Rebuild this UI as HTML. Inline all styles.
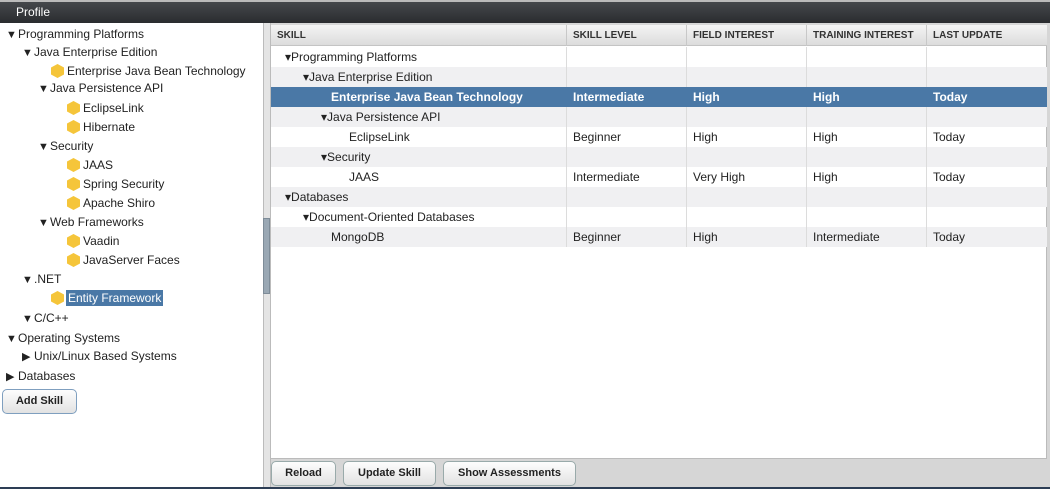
<!DOCTYPE html><html><head><style>
*{margin:0;padding:0;box-sizing:border-box}
body{width:1050px;height:489px;overflow:hidden;background:#d6d6d6;font-family:"Liberation Sans",sans-serif;font-size:12px;color:#222;position:relative}
.title{position:absolute;left:0;top:0;width:1050px;height:23px;background:linear-gradient(#45484c,#2a2c2f);border-top:2px solid #bbb;color:#fff;font-size:12px;padding:3px 0 0 16px}
.left{position:absolute;left:0;top:23px;width:263px;height:464px;background:#fff}
.sb{position:absolute;left:263px;top:23px;width:8px;height:464px;background:#e4e4e4;border-left:1px solid #bbb;border-right:1px solid #bbb}
.thumb{position:absolute;left:263px;top:218px;width:7px;height:76px;background:#9aa8b4;border:1px solid #7e8c98}
.t{position:absolute;white-space:nowrap;font-size:12px}
.tri{display:inline-block;width:12px;font-size:11px}
.hex{position:absolute;width:13px;height:14px;background:#f5c53a;clip-path:polygon(50% 0,100% 25%,100% 75%,50% 100%,0 75%,0 25%)}
.btn{position:absolute;height:25px;border:1px solid #9aa;border-radius:5px;background:linear-gradient(#fdfdfd,#e2e2e2);font-weight:bold;font-size:11px;text-align:center;line-height:23px;color:#222}
.right{position:absolute;left:271px;top:25px;width:776px;height:434px;background:#fff;border-right:1px solid #bbb;border-bottom:1px solid #bbb}
.hdr{position:absolute;left:0;top:0;width:776px;height:21px;background:linear-gradient(#f4f4f4,#dcdcdc);border-bottom:1px solid #c4c4c4}
.hc{position:absolute;top:0;height:21px;font-size:10px;font-weight:bold;color:#333;padding:5px 0 0 6px;border-right:1px solid #c8c8c8}
.row{position:absolute;left:0;width:776px;height:20px}
.c{position:absolute;top:0;height:20px;padding:3px 0 0 6px;border-right:1px solid #dcdcdc;white-space:nowrap}
.sel{background:#4a78a6;color:#fff;font-weight:bold}
.g{background:#f0f0f2}
</style></head><body>
<div class="title">Profile</div>
<div class="left">
<div class="t" style="left:6px;top:4px"><span class="tri">▼</span>Programming Platforms</div>
<div class="t" style="left:22px;top:22px"><span class="tri">▼</span>Java Enterprise Edition</div>
<div class="hex" style="left:51px;top:41px"></div><div class="t" style="left:67px;top:41px">Enterprise Java Bean Technology</div>
<div class="t" style="left:38px;top:58px"><span class="tri">▼</span>Java Persistence API</div>
<div class="hex" style="left:67px;top:78px"></div><div class="t" style="left:83px;top:78px">EclipseLink</div>
<div class="hex" style="left:67px;top:97px"></div><div class="t" style="left:83px;top:97px">Hibernate</div>
<div class="t" style="left:38px;top:116px"><span class="tri">▼</span>Security</div>
<div class="hex" style="left:67px;top:135px"></div><div class="t" style="left:83px;top:135px">JAAS</div>
<div class="hex" style="left:67px;top:154px"></div><div class="t" style="left:83px;top:154px">Spring Security</div>
<div class="hex" style="left:67px;top:173px"></div><div class="t" style="left:83px;top:173px">Apache Shiro</div>
<div class="t" style="left:38px;top:192px"><span class="tri">▼</span>Web Frameworks</div>
<div class="hex" style="left:67px;top:211px"></div><div class="t" style="left:83px;top:211px">Vaadin</div>
<div class="hex" style="left:67px;top:230px"></div><div class="t" style="left:83px;top:230px">JavaServer Faces</div>
<div class="t" style="left:22px;top:249px"><span class="tri">▼</span>.NET</div>
<div class="hex" style="left:51px;top:268px"></div><div class="t" style="left:66px;top:267px;background:#4a78a6;color:#fff;padding:1px 2px">Entity Framework</div>
<div class="t" style="left:22px;top:288px"><span class="tri">▼</span>C/C++</div>
<div class="t" style="left:6px;top:308px"><span class="tri">▼</span>Operating Systems</div>
<div class="t" style="left:22px;top:326px"><span class="tri">▶</span>Unix/Linux Based Systems</div>
<div class="t" style="left:6px;top:346px"><span class="tri">▶</span>Databases</div>
<div class="btn" style="left:2px;top:366px;width:75px;border-color:#7f9fbf">Add Skill</div>
</div>
<div class="sb"></div><div class="thumb"></div>
<div class="right">
<div class="hdr">
<div class="hc" style="left:0;width:296px">SKILL</div>
<div class="hc" style="left:296px;width:120px">SKILL LEVEL</div>
<div class="hc" style="left:416px;width:120px">FIELD INTEREST</div>
<div class="hc" style="left:536px;width:120px">TRAINING INTEREST</div>
<div class="hc" style="left:656px;width:120px;border-right:none">LAST UPDATE</div>
</div>
<div class="row" style="top:22px"><div class="c" style="left:0;width:296px;padding-left:14px">▾Programming Platforms</div><div class="c" style="left:296px;width:120px"></div><div class="c" style="left:416px;width:120px"></div><div class="c" style="left:536px;width:120px"></div></div>
<div class="row g" style="top:42px"><div class="c" style="left:0;width:296px;padding-left:32px">▾Java Enterprise Edition</div><div class="c" style="left:296px;width:120px"></div><div class="c" style="left:416px;width:120px"></div><div class="c" style="left:536px;width:120px"></div></div>
<div class="row sel" style="top:62px"><div class="c" style="left:0;width:296px;padding-left:60px;border-color:#4a78a6">Enterprise Java Bean Technology</div><div class="c" style="left:296px;width:120px;border-color:#4a78a6">Intermediate</div><div class="c" style="left:416px;width:120px;border-color:#4a78a6">High</div><div class="c" style="left:536px;width:120px;border-color:#4a78a6">High</div><div class="c" style="left:656px;width:120px;border:none">Today</div></div>
<div class="row g" style="top:82px"><div class="c" style="left:0;width:296px;padding-left:50px">▾Java Persistence API</div><div class="c" style="left:296px;width:120px"></div><div class="c" style="left:416px;width:120px"></div><div class="c" style="left:536px;width:120px"></div></div>
<div class="row" style="top:102px"><div class="c" style="left:0;width:296px;padding-left:78px">EclipseLink</div><div class="c" style="left:296px;width:120px">Beginner</div><div class="c" style="left:416px;width:120px">High</div><div class="c" style="left:536px;width:120px">High</div><div class="c" style="left:656px;width:120px;border:none">Today</div></div>
<div class="row g" style="top:122px"><div class="c" style="left:0;width:296px;padding-left:50px">▾Security</div><div class="c" style="left:296px;width:120px"></div><div class="c" style="left:416px;width:120px"></div><div class="c" style="left:536px;width:120px"></div></div>
<div class="row" style="top:142px"><div class="c" style="left:0;width:296px;padding-left:78px">JAAS</div><div class="c" style="left:296px;width:120px">Intermediate</div><div class="c" style="left:416px;width:120px">Very High</div><div class="c" style="left:536px;width:120px">High</div><div class="c" style="left:656px;width:120px;border:none">Today</div></div>
<div class="row g" style="top:162px"><div class="c" style="left:0;width:296px;padding-left:14px">▾Databases</div><div class="c" style="left:296px;width:120px"></div><div class="c" style="left:416px;width:120px"></div><div class="c" style="left:536px;width:120px"></div></div>
<div class="row" style="top:182px"><div class="c" style="left:0;width:296px;padding-left:32px">▾Document-Oriented Databases</div><div class="c" style="left:296px;width:120px"></div><div class="c" style="left:416px;width:120px"></div><div class="c" style="left:536px;width:120px"></div></div>
<div class="row g" style="top:202px"><div class="c" style="left:0;width:296px;padding-left:60px">MongoDB</div><div class="c" style="left:296px;width:120px">Beginner</div><div class="c" style="left:416px;width:120px">High</div><div class="c" style="left:536px;width:120px">Intermediate</div><div class="c" style="left:656px;width:120px;border:none">Today</div></div>
</div>
<div class="btn" style="left:271px;top:461px;width:65px">Reload</div>
<div class="btn" style="left:343px;top:461px;width:93px">Update Skill</div>
<div class="btn" style="left:443px;top:461px;width:133px">Show Assessments</div>
<div style="position:absolute;left:0;top:487px;width:1050px;height:2px;background:#2d3e55"></div>
</body></html>
